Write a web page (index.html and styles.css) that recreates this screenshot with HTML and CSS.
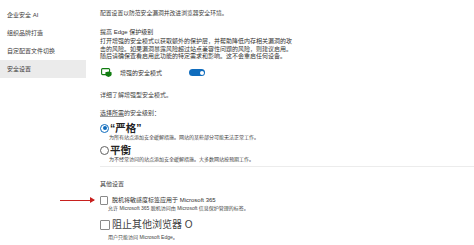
FILE: index.html
```html
<!DOCTYPE html>
<html lang="zh-CN">
<head>
<meta charset="utf-8">
<link rel="stylesheet" href="styles.css">
</head>
<body>
<div class="page">
  <nav class="sidebar">
    <div class="nav-item">企业安全 AI</div>
    <div class="nav-item">组织品牌打造</div>
    <div class="nav-item">自定配置文件切换</div>
    <div class="nav-item active">安全设置</div>
  </nav>
  <main class="main">
    <p class="desc">配置设置以防范安全漏洞并改进浏览器安全环境。</p>
    <h2 class="heading">提高 Edge 保护级别</h2>
    <p class="para">打开增强的安全模式以获取额外的保护层，并帮助降低内存相关漏洞的攻击的风险。如果漏洞暴露风险超过站点兼容性问题的风险，则建议启用。随后请确保查看启用此功能的特定需求和影响。这不会重启任何设备。</p>
    <div class="toggle-row">
      <svg class="shield" width="11" height="9" viewBox="0 0 11 9">
        <rect x="0.6" y="0.6" width="8" height="6" rx="1" fill="none" stroke="#107c10" stroke-width="1.1"/>
        <path d="M7.5 3.6 L10.6 4.3 V6.2 C10.6 7.6 9.2 8.5 7.5 8.9 C5.8 8.5 4.4 7.6 4.4 6.2 V4.3 Z" fill="#107c10"/>
      </svg>
      <span class="toggle-label">增强的安全模式</span>
      <span class="toggle"><span class="knob"></span></span>
    </div>
    <p class="link">详细了解增强型安全模式。</p>
    <p class="select-label"><span class="ul">选择所需</span>的安全级别：</p>
    <div class="option first">
      <div class="opt-row"><span class="radio checked"></span><span class="opt-title">“严格”</span></div>
      <p class="opt-sub">为所有站点添加安全缓解措施。网站的某些部分可能无法正常工作。</p>
    </div>
    <div class="option second">
      <div class="opt-row"><span class="radio"></span><span class="opt-title">平衡</span></div>
      <p class="opt-sub">为不经常访问的站点添加安全缓解措施。大多数网站按预期工作。</p>
    </div>
    <div class="separator"></div>
    <p class="other">其他设置</p>
    <div class="cb-item first">
      <span class="arrow"></span>
      <div class="cb-row"><span class="checkbox small"></span><span class="cb-title">脱机将敏感度标签应用于 Microsoft 365</span></div>
      <p class="cb-sub">允许 Microsoft 365 脱机访问由 Microsoft 信息保护管理的标签。</p>
    </div>
    <div class="cb-item second">
      <div class="cb-row big"><span class="checkbox"></span><span class="cb-title big">阻止其他浏览器 O</span></div>
      <p class="cb-sub">用户只能访问 Microsoft Edge。</p>
    </div>
  </main>
</div>
</body>
</html>
```

FILE: styles.css
```css
* { box-sizing: border-box; }
html, body { margin: 0; padding: 0; background: #fff; }
body {
  font-family: "Liberation Sans", "Noto Sans CJK SC", sans-serif;
  color: #323130;
  width: 474px;
  height: 245px;
  overflow: hidden;
}
p, h2 { margin: 0; font-weight: normal; }
.page { display: flex; }
.sidebar {
  width: 86px;
  flex: none;
  padding-top: 6px;
}
.nav-item {
  height: 18px;
  line-height: 18px;
  font-size: 6px;
  padding-left: 7px;
  color: #3b3a39;
}
.nav-item.active { background: #ebebeb; }
.main {
  flex: 1;
  padding-left: 14px;
  padding-top: 9px;
  font-size: 6px;
}
.desc { height: 8px; line-height: 8px; font-size: 5.8px; color: #3b3a39; }
.heading { font-size: 6px; height: 8px; line-height: 8px; margin-top: 11px; }
.para { margin-top: 2px; height: 22.5px; line-height: 7.5px; width: 196px; color: #323130; }
.toggle-row {
  margin-top: 7px;
  height: 10px;
  display: flex;
  align-items: center;
}
.shield { flex: none; margin-left: 1px; }
.toggle-label { margin-left: 8px; width: 69px; line-height: 8px; }
.toggle {
  width: 16px; height: 7px; border-radius: 4px;
  background: #0f6cbd;
  display: flex; align-items: center; justify-content: flex-end;
  padding-right: 1.5px;
}
.knob { width: 4px; height: 4px; border-radius: 50%; background: #fff; }
.link { margin-top: 13.5px; height: 8px; line-height: 8px; color: #424242; }
.select-label { margin-top: 10px; height: 8px; line-height: 8px; color: #424242; }
.ul { text-decoration: underline; text-decoration-color: #9a9a9a; }
.option.first { margin-top: 5.5px; }
.option.second { margin-top: 4px; }
.opt-row { display: flex; align-items: center; height: 11px; }
.radio {
  width: 9px; height: 9px; border-radius: 50%;
  border: 1px solid #616161; flex: none;
  display: flex; align-items: center; justify-content: center;
}
.radio.checked { border-color: #0f6cbd; }
.radio.checked::after {
  content: ""; width: 4px; height: 4px; border-radius: 50%; background: #0f6cbd;
}
.opt-title { font-size: 10.5px; line-height: 11px; margin-left: 1px; font-weight: bold; color: #242424; }
.opt-sub { font-size: 5px; height: 7px; line-height: 7px; padding-left: 9px; color: #424242; }
.separator { margin-top: 3.5px; border-top: 1px solid #ececec; }
.other { margin-top: 13px; height: 8px; line-height: 8px; color: #424242; }
.cb-item { position: relative; }
.cb-item.first { margin-top: 8px; }
.cb-item.second { margin-top: 7.5px; }
.cb-row { display: flex; align-items: center; height: 8px; }
.cb-row.big { height: 12px; }
.checkbox {
  width: 10px; height: 10px; border: 1px solid #8a8a8a; border-radius: 1px; flex: none;
}
.checkbox.small { width: 8px; height: 9px; }
.cb-title { margin-left: 4px; line-height: 8px; }
.cb-title.big { font-size: 10px; line-height: 12px; margin-left: 2px; color: #424242; }
.cb-sub { font-size: 5px; height: 7px; line-height: 7px; padding-left: 8px; margin-top: 0.5px; color: #424242; }
.cb-item.second .cb-sub { margin-top: 3px; }
.arrow {
  position: absolute;
  left: -40px; top: 3.5px;
  width: 34px; height: 1px; background: #c8201e;
}
.arrow::after {
  content: ""; position: absolute; right: -1px; top: -2.5px;
  border-left: 5px solid #c8201e; border-top: 3px solid transparent; border-bottom: 3px solid transparent;
}
```
